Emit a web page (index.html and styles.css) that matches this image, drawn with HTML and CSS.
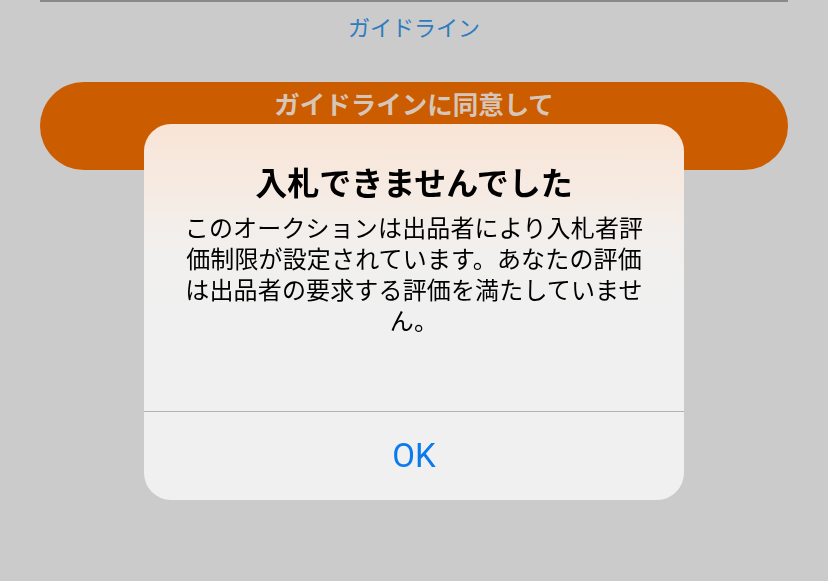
FILE: index.html
```html
<!DOCTYPE html>
<html lang="ja">
<head>
<meta charset="utf-8">
<title>入札できませんでした</title>
<link rel="stylesheet" href="styles.css">
</head>
<body>
<div class="page">
  <div class="topline"></div>
  <div class="guide-link">ガイドライン</div>
  <div class="agree-btn">ガイドラインに同意して</div>
</div>
<div class="overlay">
  <div class="alert">
    <div class="alert-body">
      <div class="alert-title">入札できませんでした</div>
      <div class="alert-message">このオークションは出品者により入札者評価制限が設定されています。あなたの評価は出品者の要求する評価を満たしていません。</div>
    </div>
    <div class="alert-actions">
      <div class="alert-ok">OK</div>
    </div>
  </div>
</div>
</body>
</html>
```

FILE: styles.css
```css
html, body {
  margin: 0;
  padding: 0;
}
body {
  width: 828px;
  height: 581px;
  overflow: hidden;
  background: #cbcbcb;
  font-family: "Noto Sans CJK JP", "Noto Sans", sans-serif;
}
.page {
  display: flex;
  flex-direction: column;
}
.topline {
  margin: 0 40px;
  height: 2px;
  background: #8a8a8a;
}
.guide-link {
  margin-top: 9px;
  text-align: center;
  font-size: 22px;
  line-height: 30px;
  color: #2d7cbf;
}
.agree-btn {
  margin: 41px 40px 0;
  height: 88px;
  box-sizing: border-box;
  border-radius: 44px;
  background: #cc5c00;
  color: #d6c6ba;
  font-weight: bold;
  font-size: 25.5px;
  line-height: 36px;
  padding-top: 3px;
  text-align: center;
}
.overlay {
  position: fixed;
  inset: 0;
  box-sizing: border-box;
  padding-top: 43px;
  display: flex;
  align-items: center;
  justify-content: center;
}
.alert {
  width: 540px;
  height: 376px;
  border-radius: 27px;
  overflow: hidden;
  display: flex;
  flex-direction: column;
  background: linear-gradient(180deg, #f9e4d6 0px, #f7e9df 50px, #f3eeea 100px, #f1f0ef 140px, #f0f0f0 200px);
}
.alert-body {
  flex: 1;
  padding: 37px 40px 0;
  text-align: center;
  color: #000;
}
.alert-title {
  font-size: 32px;
  font-weight: bold;
  line-height: 40px;
}
.alert-message {
  margin-top: 10px;
  font-size: 24px;
  line-height: 31px;
  letter-spacing: 0.15px;
}
.alert-actions {
  height: 88px;
  border-top: 1px solid #b2b2b2;
  display: flex;
  align-items: center;
  justify-content: center;
}
.alert-ok {
  font-family: Roboto, "Liberation Sans", sans-serif;
  font-size: 33px;
  color: #0a7aee;
  line-height: 40px;
}
```
